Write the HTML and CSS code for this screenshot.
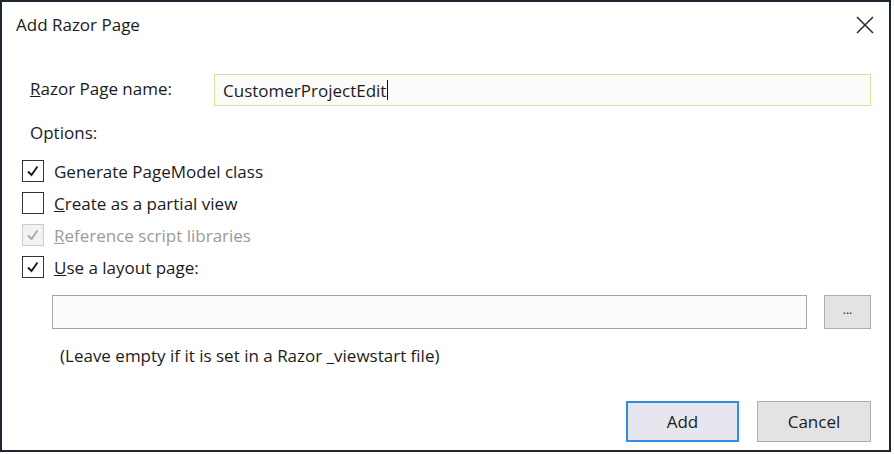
FILE: index.html
```html
<!DOCTYPE html>
<html>
<head>
<meta charset="utf-8">
<link rel="stylesheet" href="styles.css">
</head>
<body>
<div class="dialog">
  <div class="header">
    <span class="title">Add Razor Page</span>
    <svg class="close" width="18" height="18" viewBox="0 0 18 18"><path d="M1 1 L17 17 M17 1 L1 17" stroke="#2b2b2b" stroke-width="1.6" fill="none"/></svg>
  </div>
  <div class="name-row">
    <span class="label"><u>R</u>azor Page name:</span>
    <div class="name-input">CustomerProjectEdit<span class="caret"></span></div>
  </div>
  <div class="options">Options:</div>
  <div class="checks">
    <div class="check-row">
      <span class="box"><svg width="20" height="20" viewBox="0 0 20 20"><path d="M5 10.5 L8.5 14 L14.5 5.5" stroke="#1b1b1b" stroke-width="1.9" fill="none"/></svg></span>
      <span>Generate PageModel class</span>
    </div>
    <div class="check-row">
      <span class="box"></span>
      <span><u>C</u>reate as a partial view</span>
    </div>
    <div class="check-row disabled">
      <span class="box"><svg width="20" height="20" viewBox="0 0 20 20"><path d="M5 10.5 L8.5 14 L14.5 5.5" stroke="#a8a8a8" stroke-width="1.9" fill="none"/></svg></span>
      <span><u>R</u>eference script libraries</span>
    </div>
    <div class="check-row">
      <span class="box"><svg width="20" height="20" viewBox="0 0 20 20"><path d="M5 10.5 L8.5 14 L14.5 5.5" stroke="#1b1b1b" stroke-width="1.9" fill="none"/></svg></span>
      <span><u>U</u>se a layout page:</span>
    </div>
  </div>
  <div class="layout-row">
    <div class="layout-input"></div>
    <div class="browse">...</div>
  </div>
  <div class="hint">(Leave empty if it is set in a Razor _viewstart file)</div>
  <div class="buttons">
    <div class="btn primary">Add</div>
    <div class="btn">Cancel</div>
  </div>
</div>
</body>
</html>
```

FILE: styles.css
```css
html, body {
  margin: 0;
  padding: 0;
  background: #ffffff;
}
body {
  width: 894px;
  height: 454px;
  overflow: hidden;
  font-family: "Open Sans", "Noto Sans", sans-serif;
  font-size: 17px;
  color: #1b1b1b;
}
.dialog {
  box-sizing: border-box;
  width: 891px;
  height: 452px;
  border: 2px solid #1d2733;
  background: #ffffff;
  display: flex;
  flex-direction: column;
}
.header {
  height: 45px;
  flex: none;
  display: flex;
  align-items: center;
  justify-content: space-between;
  padding: 0 15px 0 14px;
}
.title {
  font-size: 17px;
}
.close {
  display: block;
}
.name-row {
  margin-top: 27px;
  height: 32px;
  flex: none;
  display: flex;
  align-items: center;
  padding: 0 18px 0 28px;
}
.label {
  width: 184px;
  position: relative;
  top: -2px;
}
.name-input {
  box-sizing: border-box;
  flex: 1;
  height: 32px;
  border: 1px solid #e6d79a;
  background: #fbfbfa;
  display: flex;
  align-items: center;
  padding-left: 8px;
}
.caret {
  display: inline-block;
  width: 1px;
  height: 20px;
  background: #111;
  margin-left: 1px;
}
.options {
  margin-top: 17px;
  height: 20px;
  flex: none;
  line-height: 20px;
  padding-left: 28px;
}
.checks {
  margin-top: 12px;
  flex: none;
  display: flex;
  flex-direction: column;
}
.check-row {
  height: 32px;
  display: flex;
  align-items: center;
  padding-left: 20px;
  gap: 10px;
}
.box {
  box-sizing: border-box;
  width: 22px;
  height: 22px;
  border: 1px solid #333333;
  background: #ffffff;
  display: flex;
  align-items: center;
  justify-content: center;
}
.disabled {
  color: #9a9a9a;
}
.disabled .box {
  border-color: #cccccc;
  background: #f2f2f2;
}
.layout-row {
  margin-top: 12px;
  flex: none;
  display: flex;
  align-items: center;
  padding: 0 18px 0 50px;
  gap: 17px;
}
.layout-input {
  box-sizing: border-box;
  flex: 1;
  height: 34px;
  border: 1px solid #a5a5a5;
  background: #fbfbfb;
}
.browse {
  box-sizing: border-box;
  width: 47px;
  height: 34px;
  border: 1px solid #adadad;
  background: #e3e3e3;
  display: flex;
  align-items: center;
  justify-content: center;
  font-size: 12px;
  line-height: 1;
  padding-bottom: 4px;
}
.hint {
  margin-top: 16px;
  flex: none;
  padding-left: 58px;
  height: 22px;
  line-height: 22px;
}
.buttons {
  margin-top: 34px;
  flex: none;
  display: flex;
  justify-content: flex-end;
  padding-right: 18px;
  gap: 18px;
}
.btn {
  box-sizing: border-box;
  width: 114px;
  height: 41px;
  border: 1px solid #adadad;
  background: #e3e3e3;
  display: flex;
  align-items: center;
  justify-content: center;
  font-size: 17px;
}
.btn.primary {
  border: 2px solid #2f8ee0;
  background: #e5e6ee;
  width: 113px;
}
```
